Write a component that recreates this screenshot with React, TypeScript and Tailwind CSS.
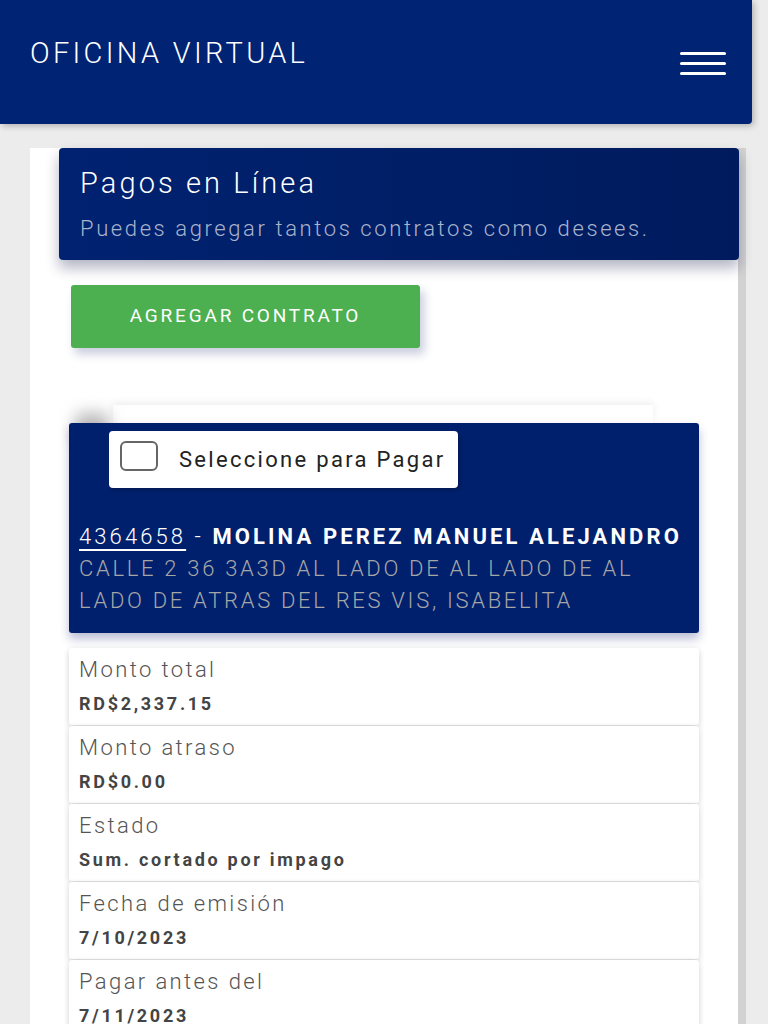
import React from "react";

const rows = [
  { label: "Monto total", value: "RD$2,337.15" },
  { label: "Monto atraso", value: "RD$0.00" },
  { label: "Estado", value: "Sum. cortado por impago" },
  { label: "Fecha de emisión", value: "7/10/2023" },
  { label: "Pagar antes del", value: "7/11/2023" },
];

function App() {
  return (
    <div className="min-h-screen overflow-hidden bg-[#ececec] font-['Roboto',sans-serif]">
      <header className="flex h-[124px] w-[752px] items-start justify-between rounded-br-[4px] bg-[#002374] pl-[30px] pr-[26px] pt-[35px] shadow-[2px_2px_6px_rgba(0,0,0,0.25)]">
        <h1 className="text-[29px] font-light leading-[36px] tracking-[3.3px] text-white">
          OFICINA VIRTUAL
        </h1>
        <button className="mt-[17px] flex w-[46px] flex-col gap-[7px]">
          <span className="h-[3px] w-full rounded-full bg-white" />
          <span className="h-[3px] w-full rounded-full bg-white" />
          <span className="h-[3px] w-full rounded-full bg-white" />
        </button>
      </header>

      <main className="ml-[30px] mt-[56px] w-[716px] border-r-[8px] border-[#d2d2d2] bg-white pb-[40px]">
        <section className="-mt-[32px] ml-[29px] mr-[-1px] rounded-[4px] bg-gradient-to-r from-[#002271] to-[#001b5d] px-[21px] pb-[16px] pt-[17px] shadow-[0_8px_14px_rgba(0,10,60,0.3)]">
          <h2 className="text-[29px] font-light leading-[36px] tracking-[3.1px] text-white">
            Pagos en Línea
          </h2>
          <p className="mt-[13px] text-[22px] font-light leading-[30px] tracking-[2.6px] text-[#a9b3cc]">
            Puedes agregar tantos contratos como desees.
          </p>
        </section>

        <button className="ml-[41px] mt-[25px] flex h-[63px] w-[349px] items-center justify-center rounded-[3px] bg-[#4caf50] text-[19px] tracking-[2.8px] text-white shadow-[4px_6px_10px_rgba(40,50,120,0.25)]">
          AGREGAR CONTRATO
        </button>

        <div className="relative ml-[83px] mt-[57px] h-[18px] w-[540px] bg-white shadow-[0_-2px_8px_rgba(0,0,0,0.08)]">
          <div className="absolute -left-[38px] top-[8px] h-[28px] w-[34px] rounded-[6px] bg-[#8a8a8a] opacity-60 blur-[8px]" />
        </div>

        <section className="relative mx-[39px] rounded-[3px] bg-[#00206e] px-[10px] pb-[16px] pt-[8px] shadow-[0_6px_10px_rgba(30,40,120,0.3)]">
          <label className="ml-[30px] flex h-[57px] w-[349px] items-center rounded-[4px] bg-white pl-[11px] shadow-[2px_2px_4px_rgba(0,0,0,0.25)]">
            <span className="mb-[8px] h-[30px] w-[38px] rounded-[6px] border-2 border-[#666]" />
            <span className="ml-[21px] text-[22px] tracking-[2.3px] text-[#222]">
              Seleccione para Pagar
            </span>
          </label>
          <p className="mt-[33px] text-[22px] leading-[32px] tracking-[3.1px] text-white">
            <span className="font-light underline decoration-2 underline-offset-[5px]">
              4364658
            </span>
            <span className="font-light"> - </span>
            <span className="font-bold">MOLINA PEREZ MANUEL ALEJANDRO</span>
          </p>
          <p className="text-[22px] font-light leading-[32px] tracking-[2.7px] text-[#a6a6a6]">
            CALLE 2 36 3A3D AL LADO DE AL LADO DE AL LADO DE ATRAS DEL RES VIS,
            ISABELITA
          </p>
        </section>

        <div className="mx-[39px] mt-[15px] flex flex-col gap-px">
          {rows.map((r) => (
            <div
              key={r.label}
              className="h-[77px] rounded-[3px] bg-white px-[10px] pt-[7px] shadow-[0_2px_6px_rgba(0,0,0,0.18)]"
            >
              <div className="text-[22px] font-light leading-[30px] tracking-[2.4px] text-[#555]">
                {r.label}
              </div>
              <div className="mt-[5px] text-[18px] font-bold leading-[28px] tracking-[2.7px] text-[#444]">
                {r.value}
              </div>
            </div>
          ))}
        </div>
      </main>
    </div>
  );
}

export default App;
